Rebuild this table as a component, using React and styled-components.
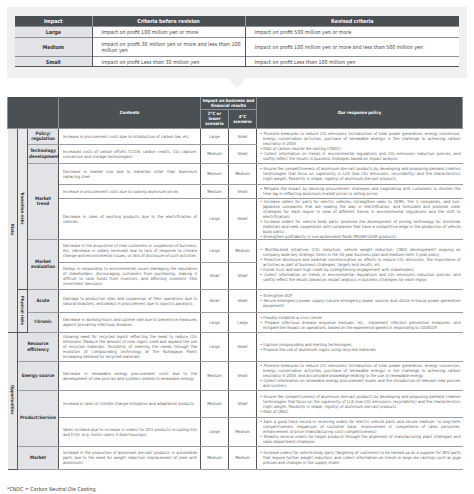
import styled, { createGlobalStyle } from "styled-components"

const GlobalStyle = createGlobalStyle`
  body {
    margin: 0;
    background: #fff;
    font-family: "Liberation Sans Narrow", "DejaVu Sans Condensed", "Liberation Sans", Arial, sans-serif;
    font-stretch: condensed;
  }
`

const Page = styled.div`
  width: 474px;
  box-sizing: border-box;
  padding: 7px 7px 0;
`

const Panel = styled.div`
  position: relative;
  background: #eef0f2;
  padding: 9px 8px 11px;
  &::after {
    content: "";
    position: absolute;
    left: 221px;
    bottom: -10px;
    border-left: 9px solid transparent;
    border-right: 9px solid transparent;
    border-top: 10px solid #eef0f2;
  }
`

const CriteriaTable = styled.table`
  width: 100%;
  border-collapse: collapse;
  table-layout: fixed;
  font-size: 5.3px;
  color: #444;
  background: #fff;
  border-bottom: 1px solid #555;
`

const CriteriaHead = styled.th`
  background: #4b5055;
  color: #fff;
  font-weight: bold;
  height: 10px;
  padding: 0;
  border-left: 1px solid #9a9ea3;
  &:first-child { border-left: none; }
`

const ImpactLabel = styled.th`
  background: #e1e3e6;
  color: #333;
  font-weight: bold;
  padding: 0;
  border-top: 1px solid #8c8f93;
`

const CriteriaCell = styled.td`
  padding: 0 4px 0 9px;
  text-align: justify;
  line-height: 6px;
  border-top: 1px solid #8c8f93;
  border-left: 1px solid #555;
`

const CriteriaRow = styled.tr`
  height: ${(p) => p.$h}px;
`

const Matrix = styled.table`
  margin-top: 19px;
  width: 456px;
  border-collapse: collapse;
  table-layout: fixed;
  color: #666;
  font-size: 4.1px;
  border-bottom: 1px solid #444;
`

const Row = styled.tr`
  height: ${(p) => p.$h}px;
`

const Head = styled.th`
  background: #4b5055;
  color: #fff;
  font-weight: bold;
  font-size: 4.3px;
  line-height: 5px;
  padding: 0 1px;
  border: 1px solid #8f9398;
  border-top: none;
`

const Side = styled.th`
  background: #e6e8ea;
  color: #333;
  font-weight: bold;
  font-size: 4.2px;
  padding: 0;
  border: 1px solid #555;
  border-left: none;
`

const Vertical = styled.span`
  display: inline-block;
  writing-mode: vertical-rl;
  white-space: nowrap;
`

const Category = styled.th`
  background: #e1e3e6;
  color: #333;
  font-weight: bold;
  font-size: 4.5px;
  line-height: 5.4px;
  padding: 0 1px;
  border: 1px solid #555;
  border-top-color: #9a9da1;
  border-bottom-color: #9a9da1;
`

const Content = styled.td`
  padding: 0 3px 0 4px;
  text-align: justify;
  line-height: 5px;
  border-bottom: 1px solid #9a9da1;
  border-top: 1px solid #9a9da1;
`

const Level = styled.td`
  text-align: center;
  padding: 0;
  border: 1px solid #555;
  border-top-color: #9a9da1;
  border-bottom-color: #9a9da1;
`

const Policy = styled.td`
  padding: 0 2px 0 3px;
  line-height: 5px;
  text-align: justify;
  border-bottom: 1px solid #9a9da1;
  border-top: 1px solid #9a9da1;
  border-left: 1px solid #555;
`

const Bullet = styled.div`
  padding-left: 3px;
  text-indent: -3px;
`

const Note = styled.p`
  margin: 16px 0 0;
  font-size: 5.3px;
  color: #444;
`

const Bullets = ({ items }) => items.map((t, i) => <Bullet key={i}>• {t}</Bullet>)

const Line = ({ label, contents, l2, l4, policy }) => (
  <>
    {label}
    <Content>{contents}</Content>
    <Level>{l2}</Level>
    <Level>{l4}</Level>
    {policy && <Policy rowSpan={policy.span || 1}><Bullets items={policy.items} /></Policy>}
  </>
)

export default function App() {
  return (
    <Page>
      <GlobalStyle />
      <Panel>
        <CriteriaTable>
          <colgroup>
            <col style={{ width: 77 }} />
            <col style={{ width: 153 }} />
            <col />
          </colgroup>
          <thead>
            <tr>
              <CriteriaHead>Impact</CriteriaHead>
              <CriteriaHead>Criteria before revision</CriteriaHead>
              <CriteriaHead>Revised criteria</CriteriaHead>
            </tr>
          </thead>
          <tbody>
            <CriteriaRow $h={11}>
              <ImpactLabel>Large</ImpactLabel>
              <CriteriaCell>Impact on profit 100 million yen or more</CriteriaCell>
              <CriteriaCell>Impact on profit 500 million yen or more</CriteriaCell>
            </CriteriaRow>
            <CriteriaRow $h={19}>
              <ImpactLabel>Medium</ImpactLabel>
              <CriteriaCell>Impact on profit 30 million yen or more and less than 100 million yen</CriteriaCell>
              <CriteriaCell>Impact on profit 100 million yen or more and less than 500 million yen</CriteriaCell>
            </CriteriaRow>
            <CriteriaRow $h={10}>
              <ImpactLabel>Small</ImpactLabel>
              <CriteriaCell>Impact on profit Less than 30 million yen</CriteriaCell>
              <CriteriaCell>Impact on profit Less than 100 million yen</CriteriaCell>
            </CriteriaRow>
          </tbody>
        </CriteriaTable>
      </Panel>

      <Matrix>
        <colgroup>
          <col style={{ width: 10 }} />
          <col style={{ width: 10 }} />
          <col style={{ width: 31 }} />
          <col style={{ width: 142 }} />
          <col style={{ width: 28 }} />
          <col style={{ width: 28 }} />
          <col />
        </colgroup>
        <thead>
          <Row $h={12}>
            <Head colSpan={3} rowSpan={2} />
            <Head rowSpan={2}>Contents</Head>
            <Head colSpan={2}>Impact on business and financial results</Head>
            <Head rowSpan={2}>Our response policy</Head>
          </Row>
          <Row $h={19}>
            <Head>2°C or lower scenario</Head>
            <Head>4°C scenario</Head>
          </Row>
        </thead>
        <tbody>
          <Row $h={16}>
            <Side rowSpan={9}><Vertical>Risks</Vertical></Side>
            <Side rowSpan={7}><Vertical>Transition risks</Vertical></Side>
            <Line
              label={<Category>Policy/ regulation</Category>}
              contents="Increase in procurement costs due to introduction of carbon tax, etc."
              l2="Large"
              l4="Small"
              policy={{
                span: 2,
                items: [
                  "Promote measures to reduce CO₂ emissions (introduction of solar power generation, energy conversion, energy conservation activities, purchase of renewable energy) in the challenge to achieving carbon neutrality in 2050",
                  "R&D of carbon neutral die casting (CNDC)",
                  "Collect information on trends in environmental regulations and CO₂ emissions reduction policies, and swiftly reflect the results in business strategies based on impact analysis",
                ],
              }}
            />
          </Row>
          <Row $h={19}>
            <Line
              label={<Category>Technology development</Category>}
              contents="Increased costs of carbon offsets (CCUS, carbon credits, CO₂ capture, conversion and storage technologies)."
              l2="Medium"
              l4="Small"
            />
          </Row>
          <Row $h={21}>
            <Line
              label={<Category rowSpan={3}>Market trend</Category>}
              contents="Decrease in market size due to materials other than aluminum replacing steel"
              l2="Medium"
              l4="Medium"
              policy={{
                items: [
                  "Ensure the competitiveness of aluminum die-cast products by developing and proposing demand creation technologies that focus on superiority in LCA (low CO₂ emissions, recyclability) and the characteristics (light weight, flexibility in shape, rigidity) of aluminum die-cast products",
                ],
              }}
            />
          </Row>
          <Row $h={14}>
            <Line
              contents="Increase in procurement costs due to soaring aluminum prices"
              l2="Medium"
              l4="Small"
              policy={{
                items: [
                  "Mitigate the impact by devising procurement strategies and negotiating with customers to shorten the time lag in reflecting aluminum market prices to selling prices",
                ],
              }}
            />
          </Row>
          <Row $h={40}>
            <Line
              contents="Decrease in sales of existing products due to the electrification of vehicles"
              l2="Large"
              l4="Small"
              policy={{
                items: [
                  "Increase orders for parts for electric vehicles (strengthen sales to OEMs, Tier 1 companies, and non-Japanese companies that are leading the way in electrification, and formulate and promote order strategies for each region in view of different trends in environmental regulations and the shift to electrification)",
                  "Increase orders for vehicle body parts (promote the development of joining technology for dissimilar materials and seek cooperation with companies that have a competitive edge in the production of vehicle body parts)",
                  "Strengthen profitability in non-automobile fields (MOVAFLOOR products)",
                ],
              }}
            />
          </Row>
          <Row $h={23}>
            <Line
              label={<Category rowSpan={2}>Market evaluation</Category>}
              contents="Decrease in the acquisition of new customers or suspension of business, etc. (decrease in orders received) due to lack of response to climate change and environmental issues, or lack of disclosure of such activities"
              l2="Large"
              l4="Medium"
              policy={{
                span: 2,
                items: [
                  "Multifaceted initiatives (CO₂ reduction, vehicle weight reduction, CNDC development) ongoing as company-wide key strategic items in the 10-year business plan and medium-term 3-year policy",
                  "Proactive disclosure and external communication on efforts to reduce CO₂ emissions, the importance of activities as part of business strategies, targets and results, etc.",
                  "Foster trust and earn high credit by strengthening engagement with stakeholders",
                  "Collect information on trends in environmental regulations and CO₂ emissions reduction policies, and swiftly reflect the results based on impact analysis in business strategies for each region",
                ],
              }}
            />
          </Row>
          <Row $h={27}>
            <Line
              contents="Delays in responding to environmental issues damaging the reputation of stakeholders, discouraging customers from purchasing, making it difficult to raise funds from investors, and affecting investors' ESG investment decisions"
              l2="Small"
              l4="Small"
            />
          </Row>
          <Row $h={23}>
            <Side rowSpan={2}><Vertical>Physical risks</Vertical></Side>
            <Line
              label={<Category>Acute</Category>}
              contents="Damage to production sites and suspension of their operations due to natural disasters, and delays in procurement due to logistics paralysis"
              l2="Small"
              l4="Small"
              policy={{
                items: [
                  "Strengthen BCP",
                  "Secure emergency power supply (secure emergency power sources and utilize in-house power generation equipment)",
                ],
              }}
            />
          </Row>
          <Row $h={20}>
            <Line
              label={<Category>Chronic</Category>}
              contents="Decrease in working hours and uptime rate due to preventive measures against prevailing infectious diseases"
              l2="Large"
              l4="Large"
              policy={{
                items: [
                  "Flexibly establish a crisis center",
                  "Prepare infectious disease response manuals, etc., implement infection prevention measures, and mitigate the impact on operations, based on the experience gained in responding to COVID19",
                ],
              }}
            />
          </Row>
          <Row $h={29}>
            <Side rowSpan={5}><Vertical>Opportunities</Vertical></Side>
            <Line
              label={<Category colSpan={2}>Resource efficiency</Category>}
              contents="Growing need for recycled ingots reflecting the need to reduce CO₂ emissions (Reduce the amount of new ingots used and expand the use of recycled materials. Possibility of meeting the needs through the evolution of compounding technology at the Kumagaya Plant) Increasing demand for recycled materials"
              l2="Large"
              l4="Small"
              policy={{
                items: [
                  "Explore compounding and melting technologies",
                  "Propose the use of aluminum ingots using recycled materials",
                ],
              }}
            />
          </Row>
          <Row $h={29}>
            <Line
              label={<Category colSpan={2}>Energy source</Category>}
              contents="Decrease in renewable energy procurement costs due to the development of new policies and systems related to renewable energy"
              l2="Medium"
              l4="Small"
              policy={{
                items: [
                  "Promote measures to reduce CO₂ emissions (introduction of solar power generation, energy conversion, energy conservation activities, purchase of renewable energy) in the challenge to achieving carbon neutrality in 2050, and accumulate knowledge relating to the use of renewable energy",
                  "Collect information on renewable energy procurement routes and the introduction of relevant new policies and systems",
                ],
              }}
            />
          </Row>
          <Row $h={27}>
            <Line
              label={<Category colSpan={2} rowSpan={2}>Product/Service</Category>}
              contents="Increase in sales of climate change mitigation and adaptation products"
              l2="Medium"
              l4="Small"
              policy={{
                items: [
                  "Ensure the competitiveness of aluminum die-cast products by developing and proposing demand creation technologies that focus on the superiority of LCA (low CO₂ emissions, recyclability) and the characteristics (light weight, flexibility in shape, rigidity) of aluminum die-cast products",
                  "R&D of CNDC",
                ],
              }}
            />
          </Row>
          <Row $h={29}>
            <Line
              contents="Sales increase due to increase in orders for ZEV products including EVs and FCVs (e.g. motor cases, E-Axle housings)"
              l2="Large"
              l4="Medium"
              policy={{
                items: [
                  "Earn a good track record in receiving orders for electric vehicle parts and secure medium- to long-term competitiveness (expansion of customer base, improvement in competence of sales personnel, enhancement of price (manufacturing cost) competitiveness)",
                  "Steadily receive orders for target products through the alignment of manufacturing plant strategies and sales department strategies",
                ],
              }}
            />
          </Row>
          <Row $h={23}>
            <Line
              label={<Category colSpan={2}>Market</Category>}
              contents="Increase in the proportion of aluminum die-cast products in automobile parts due to the need for weight reduction (replacement of steel with aluminum)"
              l2="Medium"
              l4="Medium"
              policy={{
                items: [
                  "Increase orders for vehicle body parts (targeting of customers to be ranked up as a supplier for BEV parts that require further weight reduction, and collect information on trends in large die castings such as giga presses and changes in the supply chain)",
                ],
              }}
            />
          </Row>
        </tbody>
      </Matrix>
      <Note>*CNDC = Carbon Neutral Die Casting</Note>
    </Page>
  )
}
